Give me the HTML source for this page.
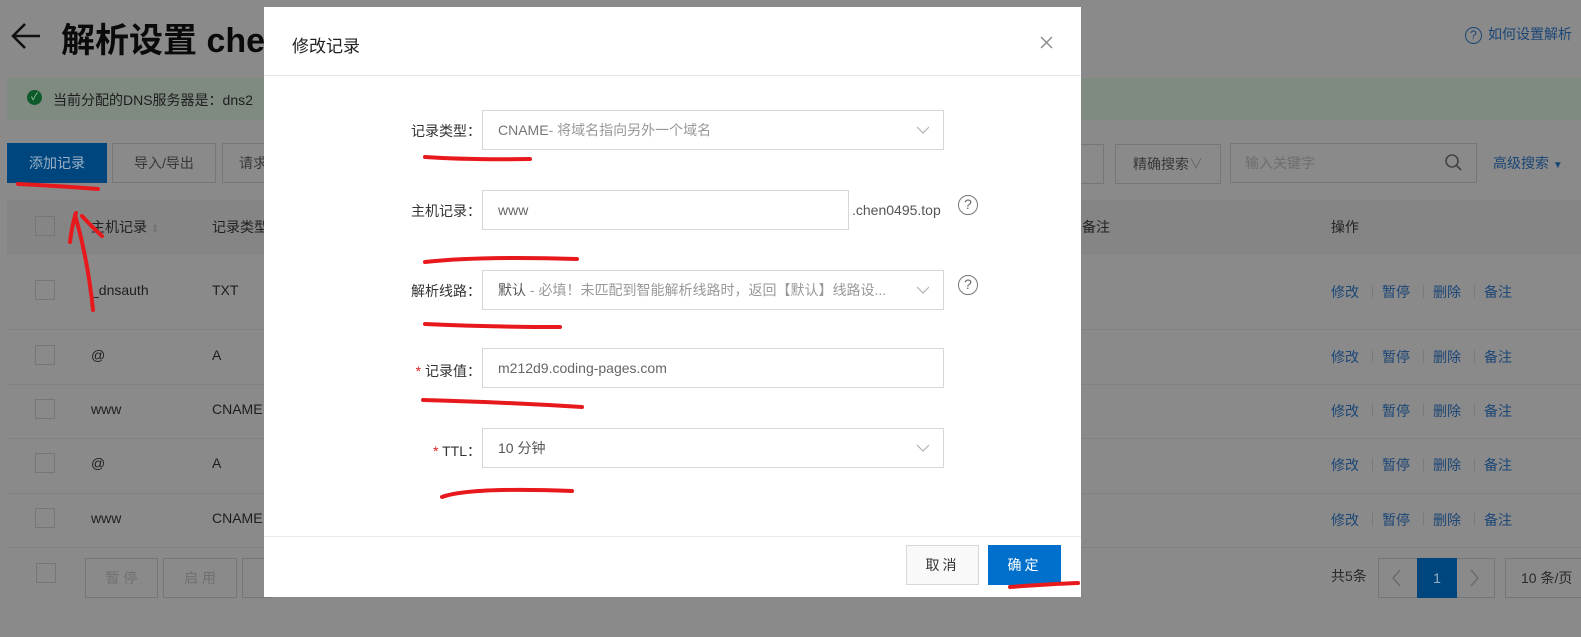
<!DOCTYPE html>
<html><head><meta charset="utf-8"><style>
*{margin:0;padding:0;box-sizing:border-box}
html{background:#8a8a8a}
body{width:1581px;height:637px;background:#8a8a8a;position:relative;overflow:hidden;font-family:"Liberation Sans","Noto Sans CJK SC",sans-serif;font-size:14px;color:#1e1e1e}
.a{position:absolute;white-space:nowrap}
.cb{position:absolute;width:20px;height:20px;border:1px solid #767676;left:35px}
.hl{position:absolute;left:7px;right:0;height:1px;background:#7d8288}
.op{position:absolute;color:#1b4676;font-size:14px}
.sep{position:absolute;width:1px;height:13px;background:#7a7a7a}
.btn{position:absolute;border:1px solid #767676;height:40px;line-height:38px;text-align:center;color:#383838}
.modal{position:absolute;left:264px;top:7px;width:817px;height:590px;background:#fff}
.lbl{position:absolute;text-align:right;color:#333;font-size:14px}
.inp{position:absolute;border:1px solid #d7d7d7;height:40px;line-height:38px;padding-left:15px;color:#555;font-size:14px;background:#fff}
.chev{position:absolute;right:14px;top:13px;width:12px;height:12px}
.q{position:absolute;width:20px;height:20px;border:1.5px solid #777;border-radius:50%;text-align:center;line-height:17px;color:#666;font-size:14px}
</style></head><body>
<svg class="a" style="left:10px;top:20px" width="32" height="32" viewBox="0 0 32 32"><path d="M30 16H3M15 4L3 16l12 12" stroke="#111" stroke-width="2.6" fill="none"/></svg>
<div class="a" style="left:61px;top:13px;font-size:34px;font-weight:bold;color:#0a0a0a">解析设置 che</div>
<div class="a" style="left:1465px;top:24px;color:#1b4676;font-size:14px"><span style="display:inline-block;width:17px;height:17px;border:1.5px solid #1b4676;border-radius:50%;text-align:center;line-height:14px;font-size:12px;margin-right:6px">?</span>如何设置解析</div>
<div class="a" style="left:7px;top:78px;width:1574px;height:42px;background:#7f8a80"></div>
<div class="a" style="left:27px;top:90px;width:15px;height:15px;border-radius:50%;background:#0f5a2a;color:#9ccca8;font-size:10px;text-align:center;line-height:15px">✓</div>
<div class="a" style="left:53px;top:90px;color:#1e1e1e">当前分配的DNS服务器是：dns2</div>
<div class="btn" style="left:7px;top:143px;width:100px;background:#00467e;border-color:#00467e;color:#9bb0c6">添加记录</div>
<div class="btn" style="left:112px;top:143px;width:104px">导入/导出</div>
<div class="btn" style="left:222px;top:143px;width:60px;text-align:left;padding-left:16px">请求</div>
<div class="btn" style="left:1060px;top:144px;width:44px"></div>
<div class="btn" style="left:1115px;top:144px;width:106px">精确搜索<span style="color:#666">∨</span></div>
<div class="btn" style="left:1230px;top:143px;width:247px;text-align:left;padding-left:14px;color:#6e6e6e">输入关键字</div>
<svg class="a" style="left:1444px;top:153px" width="20" height="20"><circle cx="8" cy="8" r="6" stroke="#444" stroke-width="1.6" fill="none"/><path d="M12.5 12.5L17 17" stroke="#444" stroke-width="1.8"/></svg>
<div class="a" style="left:1493px;top:153px;color:#1b4676">高级搜索 <span style="font-size:10px">▼</span></div>
<div class="a" style="left:7px;top:200px;width:1574px;height:53px;background:#858585"></div>
<div class="cb" style="top:216px"></div>
<div class="a" style="left:91px;top:217px;color:#222">主机记录 <span style="color:#6b6b6b;font-size:10px">⇕</span></div>
<div class="a" style="left:212px;top:217px;color:#222">记录类型</div>
<div class="a" style="left:1082px;top:217px;color:#222">备注</div>
<div class="a" style="left:1331px;top:217px;color:#222">操作</div>
<div class="hl" style="top:253px"></div>
<div class="hl" style="top:329px"></div>
<div class="hl" style="top:384px"></div>
<div class="hl" style="top:438px"></div>
<div class="hl" style="top:493px"></div>
<div class="hl" style="top:547px"></div>
<div class="cb" style="top:280px"></div><div class="a" style="left:91px;top:282px">_dnsauth</div><div class="a" style="left:212px;top:282px">TXT</div>
<div class="cb" style="top:345px"></div><div class="a" style="left:91px;top:347px">@</div><div class="a" style="left:212px;top:347px">A</div>
<div class="cb" style="top:399px"></div><div class="a" style="left:91px;top:401px">www</div><div class="a" style="left:212px;top:401px">CNAME</div>
<div class="cb" style="top:453px"></div><div class="a" style="left:91px;top:455px">@</div><div class="a" style="left:212px;top:455px">A</div>
<div class="cb" style="top:508px"></div><div class="a" style="left:91px;top:510px">www</div><div class="a" style="left:212px;top:510px">CNAME</div>
<div id="ops"></div>
<div class="cb" style="top:563px;left:36px"></div>
<div class="btn" style="left:85px;top:558px;width:73px;color:#707070">暂 停</div>
<div class="btn" style="left:163px;top:558px;width:74px;color:#707070">启 用</div>
<div class="btn" style="left:242px;top:558px;width:30px"></div>
<div class="a" style="left:1331px;top:566px;color:#2a2a2a">共5条</div>
<div class="btn" style="left:1378px;top:558px;width:117px"></div>
<svg class="a" style="left:1391px;top:569px" width="12" height="18"><path d="M9 1L2 9l7 8" stroke="#6a6a6a" fill="none" stroke-width="1.4"/></svg>
<svg class="a" style="left:1468px;top:569px" width="12" height="18"><path d="M3 1l7 8-7 8" stroke="#6a6a6a" fill="none" stroke-width="1.4"/></svg>
<div class="a" style="left:1417px;top:558px;width:40px;height:40px;background:#00467e;color:#9bb0c6;text-align:center;line-height:40px">1</div>
<div class="btn" style="left:1505px;top:558px;width:100px;text-align:left;padding-left:15px;color:#2a2a2a">10 条/页</div>
<div class="modal">
<div class="a" style="left:28px;top:25px;font-size:17px;color:#222">修改记录</div>
<svg class="a" style="left:776px;top:29px" width="13" height="13"><path d="M1 1L12 12M12 1L1 12" stroke="#888" stroke-width="1.4"/></svg>
<div class="a" style="left:0;top:68px;width:817px;height:1px;background:#e5e5e5"></div>
<div class="lbl" style="left:100px;width:117px;top:114px">记录类型：</div>
<div class="inp" style="left:218px;top:103px;width:462px"><span style="color:#777">CNAME</span><span style="color:#999">- 将域名指向另外一个域名</span><svg class="chev" viewBox="0 0 12 12"><path d="M0 3l6 6 6-6" stroke="#aaa" fill="none"/></svg></div>
<div class="lbl" style="left:100px;width:117px;top:194px">主机记录：</div>
<div class="inp" style="left:218px;top:183px;width:367px;color:#666">www</div>
<div class="a" style="left:588px;top:195px;color:#555">.chen0495.top</div>
<div class="q" style="left:694px;top:188px">?</div>
<div class="lbl" style="left:100px;width:117px;top:274px">解析线路：</div>
<div class="inp" style="left:218px;top:263px;width:462px"><span style="color:#555">默认</span><span style="color:#999"> - 必填！未匹配到智能解析线路时，返回【默认】线路设...</span><svg class="chev" viewBox="0 0 12 12"><path d="M0 3l6 6 6-6" stroke="#aaa" fill="none"/></svg></div>
<div class="q" style="left:694px;top:268px">?</div>
<div class="lbl" style="left:100px;width:117px;top:354px"><span style="color:#d22">* </span>记录值：</div>
<div class="inp" style="left:218px;top:341px;width:462px;color:#666">m212d9.coding-pages.com</div>
<div class="lbl" style="left:100px;width:117px;top:434px"><span style="color:#d22">* </span>TTL：</div>
<div class="inp" style="left:218px;top:421px;width:462px;color:#555">10 分钟<svg class="chev" viewBox="0 0 12 12"><path d="M0 3l6 6 6-6" stroke="#aaa" fill="none"/></svg></div>
<div class="a" style="left:0;top:529px;width:817px;height:1px;background:#e5ebf0"></div>
<div class="a" style="left:642px;top:538px;width:73px;height:40px;border:1px solid #d7d7d7;background:#f9f9f9;text-align:center;line-height:38px;color:#333;letter-spacing:3px">取消</div>
<div class="a" style="left:724px;top:538px;width:73px;height:40px;background:#0070cc;text-align:center;line-height:40px;color:#fff;letter-spacing:3px">确定</div>
</div>
<svg class="a" style="left:0;top:0" width="1581" height="637">
<g stroke="#e8191d" stroke-width="4" stroke-linecap="round" fill="none">
<path d="M18 184Q60 186 98 189"/>
<path d="M93 310Q88 260 75 215M70 242Q72 225 76 213M82 216Q93 228 102 236"/>
<path d="M425 157Q470 160 530 159"/>
<path d="M425 262Q480 256 577 259"/>
<path d="M425 324Q490 327 560 327"/>
<path d="M423 400Q500 402 582 407"/>
<path d="M442 497Q470 487 572 491"/>
<path d="M1010 587Q1050 584 1078 583"/>
</g></svg>
<script>
var h='',ys=[282,347,401,455,510];
ys.forEach(function(y){
 h+='<div class="op" style="left:1331px;top:'+y+'px">修改</div><div class="sep" style="left:1372px;top:'+(y+3)+'px"></div>'+
 '<div class="op" style="left:1382px;top:'+y+'px">暂停</div><div class="sep" style="left:1423px;top:'+(y+3)+'px"></div>'+
 '<div class="op" style="left:1433px;top:'+y+'px">删除</div><div class="sep" style="left:1474px;top:'+(y+3)+'px"></div>'+
 '<div class="op" style="left:1484px;top:'+y+'px">备注</div>';});
document.getElementById('ops').innerHTML=h;
</script>
</body></html>
